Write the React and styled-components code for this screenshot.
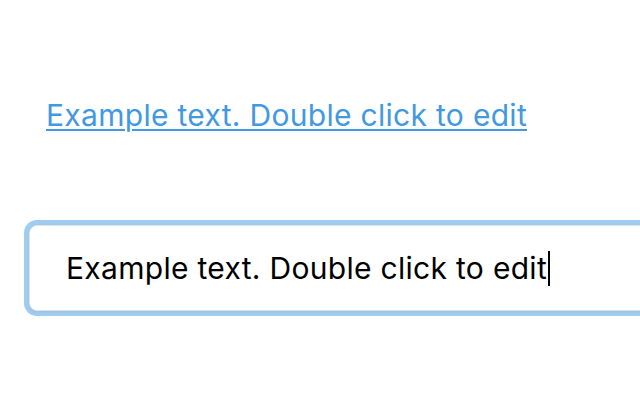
import React from 'react'
import styled, { createGlobalStyle } from 'styled-components'

const GlobalStyle = createGlobalStyle`
	html, body {
		margin: 0;
		padding: 0;
		background: #ffffff;
		overflow: hidden;
	}
	body {
		font-family: Inter, "Noto Sans", sans-serif;
	}
`

const Page = styled.div`
	width: 640px;
	height: 400px;
	display: flex;
	flex-direction: column;
	padding-top: 97px;
	box-sizing: border-box;
	overflow: hidden;
`

const EditLink = styled.a`
	align-self: flex-start;
	margin-left: 46px;
	font-size: 30px;
	line-height: 36px;
	letter-spacing: 0.3px;
	color: #4299e1;
	text-decoration: underline;
	text-decoration-thickness: 2px;
	text-underline-offset: 3px;
	cursor: pointer;
`

const EditBox = styled.div`
	margin-top: 92px;
	margin-left: 29px;
	width: 660px;
	height: 86px;
	flex-shrink: 0;
	box-sizing: border-box;
	display: flex;
	align-items: center;
	padding-left: 36px;
	border: 1px solid #dfe3e8;
	border-radius: 8px;
	background: #ffffff;
	box-shadow: 0 0 0 5px rgba(66, 153, 225, 0.5), 0 1px 3px rgba(0, 0, 0, 0.1);
	font-size: 30px;
	letter-spacing: 0.3px;
	color: #000000;
	white-space: nowrap;
`

const Caret = styled.span`
	display: inline-block;
	width: 2px;
	height: 35px;
	margin-left: 1px;
	background: #000000;
`

export default function App() {
	return (
		<>
			<GlobalStyle />
			<Page>
				<EditLink>Example text. Double click to edit</EditLink>
				<EditBox>
					Example text. Double click to edit
					<Caret />
				</EditBox>
			</Page>
		</>
	)
}
